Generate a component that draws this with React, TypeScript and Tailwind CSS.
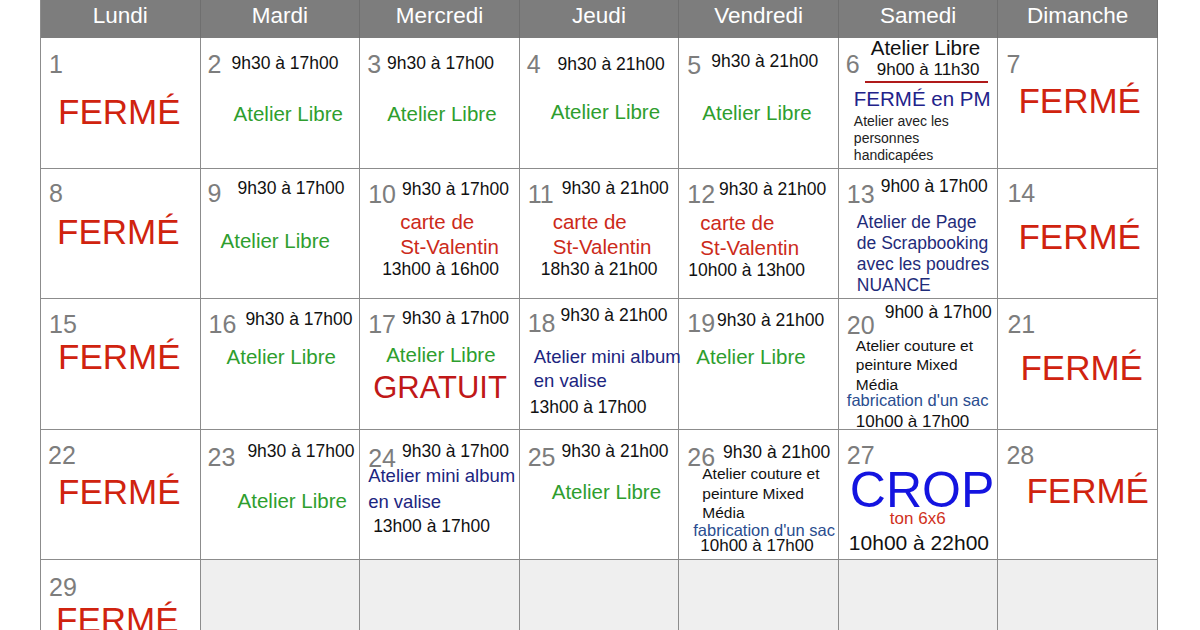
import type { ReactNode } from 'react';

const days = ['Lundi', 'Mardi', 'Mercredi', 'Jeudi', 'Vendredi', 'Samedi', 'Dimanche'];

function Cell({ children, muted = false }: { children?: ReactNode; muted?: boolean }) {
  return (
    <div
      className={`flex flex-col h-[130.5px] border-r border-b border-[#8c8c8c] whitespace-nowrap overflow-visible ${
        muted ? 'bg-[#efefef]' : ''
      }`}
    >
      {children}
    </div>
  );
}

function Top({
  n,
  nCls,
  nLh = 'leading-[24px]',
  time,
  tCls = '',
}: {
  n: string;
  nCls: string;
  nLh?: string;
  time?: string;
  tCls?: string;
}) {
  return (
    <div className="flex items-start">
      <span className={`text-[25px] text-[#7d7d7d] ${nLh} ${nCls}`}>{n}</span>
      {time && <span className={`text-[17.5px] leading-[20px] text-[#111] ${tCls}`}>{time}</span>}
    </div>
  );
}

function Ferme({ className }: { className: string }) {
  return <p className={`text-[35px] leading-[36px] text-[#d0230f] ${className}`}>FERMÉ</p>;
}

function Libre({ className }: { className: string }) {
  return <p className={`text-[20.5px] leading-[24px] text-[#2e9e2e] ${className}`}>Atelier Libre</p>;
}

function Hours({ children, className }: { children: ReactNode; className: string }) {
  return <p className={`text-[17.5px] leading-[20px] text-[#111] ${className}`}>{children}</p>;
}

function Valentin({ className }: { className: string }) {
  return (
    <p className={`text-[20.5px] leading-[25px] text-[#cc2a1a] ${className}`}>
      carte de
      <br />
      St-Valentin
    </p>
  );
}

function MiniAlbum({ firstCls, secondCls }: { firstCls: string; secondCls: string }) {
  return (
    <>
      <p className={`text-[18.5px] text-[#1c2580] ${firstCls}`}>Atelier mini album</p>
      <p className={`text-[18.5px] text-[#1c2580] ${secondCls}`}>en valise</p>
    </>
  );
}

function Couture({ className, fabCls, hoursCls }: { className: string; fabCls: string; hoursCls: string }) {
  return (
    <>
      <p className={`text-[15.5px] leading-[19.5px] text-[#111] ${className}`}>
        Atelier couture et
        <br />
        peinture Mixed
        <br />
        Média
      </p>
      <p className={`text-[16.5px] leading-[13px] text-[#2a4d8f] ${fabCls}`}>fabrication d'un sac</p>
      <p className={`text-[17px] text-[#111] ${hoursCls}`}>10h00 à 17h00</p>
    </>
  );
}

export default function App() {
  return (
    <div className="w-[1200px] h-[630px] overflow-hidden bg-white font-['Liberation_Sans',Arial,sans-serif]">
      <div className="grid grid-cols-7 w-[1118px] ml-[40px] border-l border-[#8c8c8c]">
        {days.map((d) => (
          <div
            key={d}
            className="h-[38px] bg-[#7d7d7d] border-r border-[#6f6f6f] text-center text-[22.5px] leading-[32px] text-white"
          >
            {d}
          </div>
        ))}

        {/* Semaine 1 */}
        <Cell>
          <Top n="1" nCls="ml-[8px] mt-[14px]" />
          <Ferme className="ml-[17px] mt-[17.5px]" />
        </Cell>
        <Cell>
          <Top n="2" nCls="ml-[7px] mt-[14px]" time="9h30 à 17h00" tCls="ml-[10px] mt-[15px]" />
          <Libre className="ml-[33px] mt-[26px]" />
        </Cell>
        <Cell>
          <Top n="3" nCls="ml-[7px] mt-[14px]" time="9h30 à 17h00" tCls="ml-[6px] mt-[15px]" />
          <Libre className="ml-[27px] mt-[26px]" />
        </Cell>
        <Cell>
          <Top n="4" nCls="ml-[7px] mt-[14px]" time="9h30 à 21h00" tCls="ml-[17px] mt-[16px]" />
          <Libre className="ml-[31px] mt-[23.5px]" />
        </Cell>
        <Cell>
          <Top n="5" nCls="ml-[8px] mt-[15px]" time="9h30 à 21h00" tCls="ml-[10px] mt-[13px]" />
          <Libre className="ml-[23px] mt-[24px]" />
        </Cell>
        <Cell>
          <div className="flex items-start">
            <span className="ml-[7px] mt-[14px] text-[25px] leading-[24px] text-[#7d7d7d]">6</span>
            <div className="ml-[11px] flex flex-col">
              <p className="text-[20.5px] leading-[20px] text-[#111]">Atelier Libre</p>
              <p className="ml-[6px] mt-[2px] text-[17px] leading-[20px] text-[#111]">9h00 à 11h30</p>
            </div>
          </div>
          <div className="ml-[26px] mt-[1px] h-[2px] w-[123px] bg-[#b01a1a]" />
          <p className="ml-[15px] mt-[3.5px] text-[20.5px] leading-[24px] text-[#22228a]">FERMÉ en PM</p>
          <p className="ml-[15px] mt-[2px] text-[14px] leading-[17px] text-[#222]">
            Atelier avec les
            <br />
            personnes
            <br />
            handicapées
          </p>
        </Cell>
        <Cell>
          <Top n="7" nCls="ml-[8px] mt-[14px]" />
          <Ferme className="ml-[20px] mt-[7px]" />
        </Cell>

        {/* Semaine 2 */}
        <Cell>
          <Top n="8" nCls="ml-[8px] mt-[12.5px]" />
          <Ferme className="ml-[16px] mt-[9px]" />
        </Cell>
        <Cell>
          <Top n="9" nCls="ml-[7px] mt-[12.5px]" time="9h30 à 17h00" tCls="ml-[16px] mt-[9.5px]" />
          <Libre className="ml-[20px] mt-[24px]" />
        </Cell>
        <Cell>
          <Top n="10" nCls="ml-[8px] mt-[13.5px]" time="9h30 à 17h00" tCls="ml-[6px] mt-[10.5px]" />
          <Valentin className="ml-[40px] mt-[2.5px]" />
          <Hours className="ml-[22px] mt-[0.5px]">13h00 à 16h00</Hours>
        </Cell>
        <Cell>
          <Top n="11" nCls="ml-[8px] mt-[13.5px]" time="9h30 à 21h00" tCls="ml-[8px] mt-[9.5px]" />
          <Valentin className="ml-[33px] mt-[2.5px]" />
          <Hours className="ml-[21px] mt-0">18h30 à 21h00</Hours>
        </Cell>
        <Cell>
          <Top n="12" nCls="ml-[8px] mt-[13.5px]" time="9h30 à 21h00" tCls="ml-[4px] mt-[10.5px]" />
          <Valentin className="ml-[21px] mt-[3.5px]" />
          <Hours className="ml-[9px] mt-[0.5px]">10h00 à 13h00</Hours>
        </Cell>
        <Cell>
          <Top n="13" nCls="ml-[8px] mt-[13.5px]" time="9h00 à 17h00" tCls="ml-[6px] mt-[7.5px]" />
          <p className="ml-[18px] mt-[6px] text-[17.5px] leading-[21px] text-[#1f2c7a]">
            Atelier de Page
            <br />
            de Scrapbooking
            <br />
            avec les poudres
            <br />
            NUANCE
          </p>
        </Cell>
        <Cell>
          <Top n="14" nCls="ml-[9px] mt-[12.5px]" />
          <Ferme className="ml-[20px] mt-[14px]" />
        </Cell>

        {/* Semaine 3 */}
        <Cell>
          <Top n="15" nCls="ml-[8px] mt-[13px]" />
          <Ferme className="ml-[17px] mt-[3px]" />
        </Cell>
        <Cell>
          <Top n="16" nCls="ml-[8px] mt-[13px]" time="9h30 à 17h00" tCls="ml-[9px] mt-[10px]" />
          <Libre className="ml-[26px] mt-[8.5px]" />
        </Cell>
        <Cell>
          <Top n="17" nCls="ml-[8px] mt-[13px]" time="9h30 à 17h00" tCls="ml-[6px] mt-[9px]" />
          <Libre className="ml-[26px] mt-[7px]" />
          <p className="ml-[13px] mt-[4px] text-[31px] leading-[34px] text-[#c01818]">GRATUIT</p>
        </Cell>
        <Cell>
          <Top n="18" nCls="ml-[8px] mt-[12px]" time="9h30 à 21h00" tCls="ml-[5px] mt-[6px]" />
          <MiniAlbum firstCls="ml-[14px] mt-[10px] leading-[24px]" secondCls="ml-[14px] leading-[24px]" />
          <Hours className="ml-[10px] mt-[4px]">13h00 à 17h00</Hours>
        </Cell>
        <Cell>
          <Top n="19" nCls="ml-[8px] mt-[12px]" time="9h30 à 21h00" tCls="ml-[2px] mt-[11px]" />
          <Libre className="ml-[17px] mt-[10px]" />
        </Cell>
        <Cell>
          <Top n="20" nCls="ml-[8px] mt-[17px]" nLh="leading-[18px]" time="9h00 à 17h00" tCls="ml-[10px] mt-[3px]" />
          <Couture
            className="ml-[17px] mt-[1.5px]"
            fabCls="ml-[8px] mt-0"
            hoursCls="ml-[17px] mt-[4.5px] leading-[20px]"
          />
        </Cell>
        <Cell>
          <Top n="21" nCls="ml-[9px] mt-[13px]" />
          <Ferme className="ml-[22px] mt-[14px]" />
        </Cell>

        {/* Semaine 4 */}
        <Cell>
          <Top n="22" nCls="ml-[7px] mt-[13.5px]" />
          <Ferme className="ml-[17px] mt-[7px]" />
        </Cell>
        <Cell>
          <Top n="23" nCls="ml-[7px] mt-[15.5px]" time="9h30 à 17h00" tCls="ml-[12px] mt-[11.5px]" />
          <Libre className="ml-[37px] mt-[20px]" />
        </Cell>
        <Cell>
          <Top n="24" nCls="ml-[8px] mt-[19.5px]" nLh="leading-[18px]" time="9h30 à 17h00" tCls="ml-[6px] mt-[11.5px]" />
          <MiniAlbum firstCls="ml-[8px] mt-0 leading-[18px]" secondCls="ml-[8px] mt-[3.5px] leading-[25px]" />
          <Hours className="ml-[13px] mt-[2.5px]">13h00 à 17h00</Hours>
        </Cell>
        <Cell>
          <Top n="25" nCls="ml-[8px] mt-[15.5px]" time="9h30 à 21h00" tCls="ml-[6px] mt-[11.5px]" />
          <Libre className="ml-[32px] mt-[11px]" />
        </Cell>
        <Cell>
          <Top n="26" nCls="ml-[8px] mt-[20.5px]" nLh="leading-[14px]" time="9h30 à 21h00" tCls="ml-[8px] mt-[12.5px]" />
          <Couture
            className="ml-[23px] mt-0"
            fabCls="ml-[14px] mt-[1.75px]"
            hoursCls="ml-[21px] mt-0 leading-[17px]"
          />
        </Cell>
        <Cell>
          <Top n="27" nCls="ml-[8px] mt-[13.5px]" />
          <p className="ml-[11px] mt-[3px] text-[50px] leading-[40px] text-[#1414e0]">CROP</p>
          <p className="ml-[51px] mt-0 text-[17px] leading-[18px] text-[#d03020]">ton 6x6</p>
          <p className="ml-[10px] mt-[3px] text-[21px] leading-[24px] text-[#111]">10h00 à 22h00</p>
        </Cell>
        <Cell>
          <Top n="28" nCls="ml-[8px] mt-[13.5px]" />
          <Ferme className="ml-[28px] mt-[6px]" />
        </Cell>

        {/* Semaine 5 */}
        <Cell>
          <Top n="29" nCls="ml-[8px] mt-[15px]" />
          <Ferme className="ml-[15px] mt-[3px]" />
        </Cell>
        <Cell muted />
        <Cell muted />
        <Cell muted />
        <Cell muted />
        <Cell muted />
        <Cell muted />
      </div>
    </div>
  );
}
